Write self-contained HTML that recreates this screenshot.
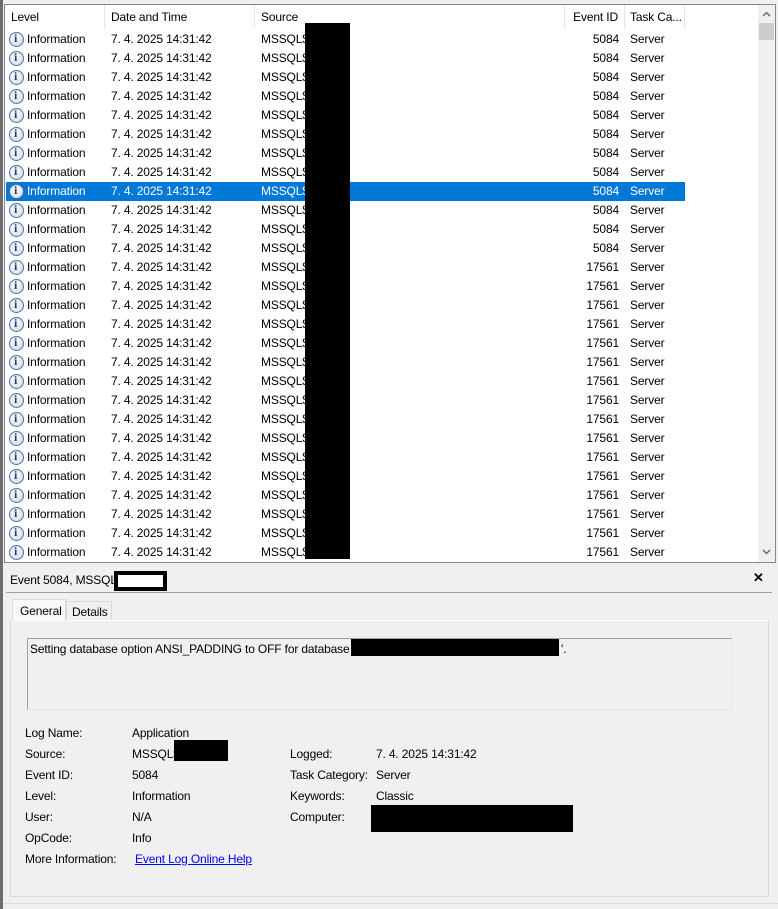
<!DOCTYPE html>
<html><head><style>
*{margin:0;padding:0;box-sizing:border-box}
body{width:778px;height:909px;background:#f0f0f0;font:12px "Liberation Sans",sans-serif;color:#000;position:relative;overflow:hidden;letter-spacing:-0.15px}
.a{position:absolute;white-space:nowrap}
#list{position:absolute;left:4px;top:4px;width:772px;height:559px;background:#fff;border:1px solid #828790;overflow:hidden}
.hd{position:absolute;top:0;height:24px;line-height:24px;color:#000;border-right:1px solid #e5e5e5}
.row{position:absolute;left:1px;width:679px;height:19px;line-height:19px}
.row span{position:absolute}
.sel{background:#0078d7;color:#fff}
.ic{width:15px;height:15px;border-radius:50%;border:1px solid #4a6fa5;background:radial-gradient(circle at 40% 35%,#fff,#c9d6e8);top:2px;left:3px}
.ic:after{content:"i";position:absolute;left:4px;top:-2px;font:bold 12px "Liberation Serif",serif;color:#1a3f7a}
#sb{position:absolute;right:0;top:0;width:17px;height:557px;background:#f0f0f0}
</style></head><body>
<div style="position:absolute;left:0;top:0;width:3px;height:909px;background:#6d6d6d"></div>
<div id="list">
<div class="hd" style="left:0;width:100px;padding-left:6px">Level</div>
<div class="hd" style="left:100px;width:150px;padding-left:6px">Date and Time</div>
<div class="hd" style="left:250px;width:310px;padding-left:6px">Source</div>
<div class="hd" style="left:560px;width:60px;text-align:right;padding-right:6px">Event ID</div>
<div class="hd" style="left:620px;width:60px;padding-left:5px">Task Ca...</div>
<div id="sb"><div style="position:absolute;left:1px;top:18px;width:15px;height:17px;background:#cdcdcd"></div>
<svg class="a" style="left:4px;top:6px" width="9" height="6"><path d="M1 5L4.5 1.5L8 5" stroke="#606060" stroke-width="1.3" fill="none"/></svg>
<svg class="a" style="left:4px;top:544px" width="9" height="6"><path d="M1 1L4.5 4.5L8 1" stroke="#606060" stroke-width="1.3" fill="none"/></svg></div>
<div id="rows"></div>
<div style="position:absolute;left:300px;top:18px;width:45px;height:536px;background:#000"></div>
</div>
<script>
var h='';for(var i=0;i<28;i++){var t=25+i*19;var id=i<12?'5084':'17561';
h+='<div class="row'+(i==8?' sel':'')+'" style="top:'+t+'px"><span class="ic"></span><span style="left:21px">Information</span><span style="left:105px">7. 4. 2025 14:31:42</span><span style="left:255px">MSSQL$</span><span style="left:560px;width:53px;text-align:right">'+id+'</span><span style="left:624px">Server</span></div>';}
document.getElementById('rows').innerHTML=h;
</script>
<div class="a" style="left:10px;top:573px">Event 5084, MSSQL$</div>
<div class="a" style="left:114px;top:571px;width:53px;height:20px;background:#fff;border:4px solid #000"></div>
<div class="a" style="left:753px;top:570px;font-weight:bold;font-size:13px">✕</div>
<div class="a" style="left:6px;top:592px;width:766px;height:1px;background:#a0a0a0"></div>
<div class="a" style="left:10px;top:620px;width:759px;height:277px;background:#f0f0f0;border:1px solid #d9d9d9;border-top:1px solid #fff"></div>
<div class="a" style="left:3px;top:903px;width:775px;height:1px;background:#d9d9d9"></div>
<div class="a" style="left:12px;top:599px;width:54px;height:22px;background:#f9f9f9;border:1px solid #d9d9d9;border-bottom:none;padding:4px 0 0 7px">General</div>
<div class="a" style="left:66px;top:601px;width:46px;height:19px;border:1px solid #d9d9d9;border-bottom:none;padding:3px 0 0 5px">Details</div>
<div class="a" style="left:27px;top:638px;width:705px;height:72px;border:1px solid #a0a0a0;border-right-color:#e3e3e3;border-bottom-color:#e3e3e3"></div>
<div class="a" style="left:30px;top:642px">Setting database option ANSI_PADDING to OFF for database</div>
<div class="a" style="left:351px;top:639px;width:208px;height:17px;background:#000"></div>
<div class="a" style="left:561px;top:642px">'.</div>
<div class="a" style="left:25px;top:726px">Log Name:</div><div class="a" style="left:132px;top:726px">Application</div>
<div class="a" style="left:25px;top:747px">Source:</div><div class="a" style="left:132px;top:747px">MSSQL$</div>
<div class="a" style="left:174px;top:740px;width:54px;height:21px;background:#000"></div>
<div class="a" style="left:290px;top:747px">Logged:</div><div class="a" style="left:376px;top:747px">7. 4. 2025 14:31:42</div>
<div class="a" style="left:25px;top:768px">Event ID:</div><div class="a" style="left:132px;top:768px">5084</div>
<div class="a" style="left:290px;top:768px">Task Category:</div><div class="a" style="left:376px;top:768px">Server</div>
<div class="a" style="left:25px;top:789px">Level:</div><div class="a" style="left:132px;top:789px">Information</div>
<div class="a" style="left:290px;top:789px">Keywords:</div><div class="a" style="left:376px;top:789px">Classic</div>
<div class="a" style="left:25px;top:810px">User:</div><div class="a" style="left:132px;top:810px">N/A</div>
<div class="a" style="left:290px;top:810px">Computer:</div>
<div class="a" style="left:371px;top:805px;width:202px;height:27px;background:#000"></div>
<div class="a" style="left:25px;top:831px">OpCode:</div><div class="a" style="left:132px;top:831px">Info</div>
<div class="a" style="left:25px;top:852px">More Information:</div>
<div class="a" style="left:135px;top:852px;color:#0000ff;text-decoration:underline">Event Log Online Help</div>
</body></html>
